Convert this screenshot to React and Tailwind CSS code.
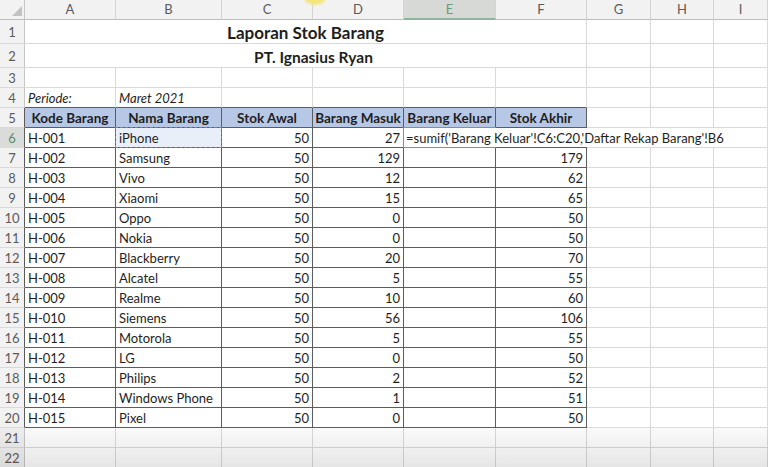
import React from "react";

const COLS = ["A", "B", "C", "D", "E", "F", "G", "H", "I"];

const DATA = [
  ["H-001", "iPhone", 50, 27, "", ""],
  ["H-002", "Samsung", 50, 129, "", 179],
  ["H-003", "Vivo", 50, 12, "", 62],
  ["H-004", "Xiaomi", 50, 15, "", 65],
  ["H-005", "Oppo", 50, 0, "", 50],
  ["H-006", "Nokia", 50, 0, "", 50],
  ["H-007", "Blackberry", 50, 20, "", 70],
  ["H-008", "Alcatel", 50, 5, "", 55],
  ["H-009", "Realme", 50, 10, "", 60],
  ["H-010", "Siemens", 50, 56, "", 106],
  ["H-011", "Motorola", 50, 5, "", 55],
  ["H-012", "LG", 50, 0, "", 50],
  ["H-013", "Philips", 50, 2, "", 52],
  ["H-014", "Windows Phone", 50, 1, "", 51],
  ["H-015", "Pixel", 50, 0, "", 50],
];

const HEAD = ["Kode Barang", "Nama Barang", "Stok Awal", "Barang Masuk", "Barang Keluar", "Stok Akhir"];

function rowHeight(r) {
  return r === 1 || r === 2 ? "h-[24px]" : "h-[20px]";
}

function RowHeader({ r }) {
  const inTable = r >= 5 && r <= 20;
  const active = r === 6;
  return (
    <div
      className={`${rowHeight(r)} flex items-center justify-center pt-[2px] border-b border-b-[#d9d9d9] border-r ${
        inTable ? "border-r-[#5c5c5c]" : "border-r-[#c6c6c6]"
      } ${active ? "bg-[#d9dcd9] text-[#5f8a6c]" : "bg-[#f2f2f2] text-[#5b5b5b]"} text-[13px]`}
    >
      {r}
    </div>
  );
}

function Cell({ r, c, children, align = "left", extra = "" }) {
  const inTable = r >= 5 && r <= 20 && c <= 5;
  const rightDark = inTable;
  const bottomDark = inTable || (r === 4 && c <= 5);
  const alignCls = align === "right" ? "justify-end pr-[3px]" : align === "center" ? "justify-center" : "justify-start pl-[3px]";
  return (
    <div
      className={`${rowHeight(r)} relative flex items-center pt-[2px] whitespace-nowrap border-r border-b ${
        rightDark ? "border-r-[#5c5c5c]" : "border-r-[#dadada]"
      } ${bottomDark ? "border-b-[#5c5c5c]" : "border-b-[#dadada]"} ${alignCls} ${extra}`}
    >
      {children}
    </div>
  );
}

export default function App() {
  const rows = [];
  for (let r = 1; r <= 22; r++) {
    const cells = [<RowHeader key="h" r={r} />];
    if (r === 1 || r === 2) {
      cells.push(
        <div
          key="m"
          className={`col-span-6 h-[24px] flex items-center justify-center border-r border-b border-r-[#dadada] border-b-[#dadada] font-bold text-[#1e1e1e] ${
            r === 1 ? "text-[17px] pt-[3px]" : "text-[15.5px] pl-[16px] pt-[4px]"
          }`}
        >
          {r === 1 ? "Laporan Stok Barang" : "PT. Ignasius Ryan"}
        </div>
      );
      for (let c = 6; c < 9; c++) cells.push(<Cell key={c} r={r} c={c} />);
    } else {
      for (let c = 0; c < 9; c++) {
        let content = null;
        let align = "left";
        let extra = "";
        if (r === 4) {
          if (c === 0) content = <span className="italic">Periode:</span>;
          if (c === 1) content = <span className="italic">Maret 2021</span>;
        } else if (r === 5 && c <= 5) {
          content = HEAD[c];
          align = "center";
          extra = "bg-[#b7c8e6] font-bold text-[13.5px]";
        } else if (r >= 6 && r <= 20 && c <= 5) {
          const v = DATA[r - 6][c];
          content = v === "" ? null : String(v);
          align = c >= 2 ? "right" : "left";
          if (r === 6 && c === 1) {
            extra = "bg-[#e9eff8]";
            content = (
              <>
                {content}
                <div className="pointer-events-none absolute inset-[-1px] border-[1.5px] border-dashed border-[#5a8fb4]" />
              </>
            );
          }
          if (r === 6 && c === 4) {
            content = (
              <>
                <div className="pointer-events-none absolute left-[-1px] top-[-1px] h-[21px] w-[93px] border border-[#6aa27b]" />
                <div className="absolute left-0 top-0 z-10 flex h-[19px] items-center bg-white pl-[2px] pr-[6px] pt-[2px] text-[#1e1e1e]">
                  =sumif('Barang Keluar'!C6:C20,'Daftar Rekap Barang'!B6
                </div>
              </>
            );
          }
        }
        cells.push(
          <Cell key={c} r={r} c={c} align={align} extra={extra}>
            {content}
          </Cell>
        );
      }
    }
    rows.push(<React.Fragment key={r}>{cells}</React.Fragment>);
  }

  return (
    <div
      className="relative h-[467px] w-[768px] overflow-hidden bg-white text-[13px] text-[#1e1e1e]"
      style={{ fontFamily: "Lato, 'Open Sans', sans-serif" }}
    >
      <div className="grid grid-cols-[25px_91px_106px_91px_91px_92px_91px_64px_63px_54px]">
        <div className="flex h-[20px] items-end justify-end pr-[2px] pb-[3px] border-r border-b border-r-[#c6c6c6] border-b-[#bdbdbd] bg-[#f2f2f2]">
          <svg width="10" height="10" viewBox="0 0 10 10">
            <polygon points="10,0 10,10 0,10" fill="#c2c2c2" />
          </svg>
        </div>
        {COLS.map((L) => (
          <div
            key={L}
            className={`flex h-[20px] items-center justify-center pt-[1px] border-r border-r-[#d4d4d4] text-[13px] ${
              L === "E"
                ? "border-b-2 border-b-[#8fb59a] bg-[#d6d9d6] text-[#6f9a7a]"
                : "border-b border-b-[#bdbdbd] bg-[#f2f2f2] text-[#5b5b5b]"
            }`}
          >
            {L}
          </div>
        ))}
        {rows}
      </div>
      <div className="pointer-events-none absolute left-0 right-0 top-[428px] h-[40px] bg-gradient-to-b from-[rgba(0,0,0,0.02)] to-[rgba(0,0,0,0.1)]" />
      <div className="pointer-events-none absolute left-[302px] top-[-21px] h-[26px] w-[26px] rounded-full bg-[#f4e47c] blur-[1px]" />
    </div>
  );
}
